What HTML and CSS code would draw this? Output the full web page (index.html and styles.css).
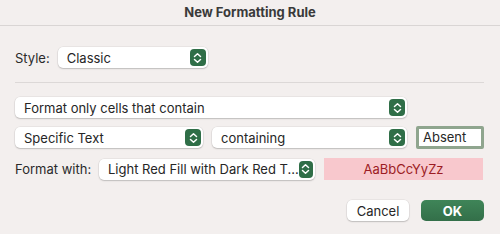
FILE: index.html
```html
<!DOCTYPE html>
<html lang="en">
<head>
    <meta charset="UTF-8">
    <title>New Formatting Rule</title>
    <link rel="stylesheet" href="styles.css">
</head>
<body>
    <div class="dialog">
        <div class="titlebar">New Formatting Rule</div>

        <div class="content">
            <div class="row style-row">
                <span class="label">Style:</span>
                <div class="select w-style">
                    <span class="value">Classic</span>
                    <span class="stepper">
                        <svg width="9" height="12" viewBox="0 0 9 12"><path d="M1.5 4.5 L4.5 1.8 L7.5 4.5 M1.5 7.5 L4.5 10.2 L7.5 7.5" fill="none" stroke="#fff" stroke-width="1.5" stroke-linecap="round" stroke-linejoin="round"/></svg>
                    </span>
                </div>
            </div>

            <div class="divider"></div>

            <div class="row row-type">
                <div class="select w-type">
                    <span class="value">Format only cells that contain</span>
                    <span class="stepper">
                        <svg width="9" height="12" viewBox="0 0 9 12"><path d="M1.5 4.5 L4.5 1.8 L7.5 4.5 M1.5 7.5 L4.5 10.2 L7.5 7.5" fill="none" stroke="#fff" stroke-width="1.5" stroke-linecap="round" stroke-linejoin="round"/></svg>
                    </span>
                </div>
            </div>

            <div class="row row-cond">
                <div class="select w-what">
                    <span class="value">Specific Text</span>
                    <span class="stepper">
                        <svg width="9" height="12" viewBox="0 0 9 12"><path d="M1.5 4.5 L4.5 1.8 L7.5 4.5 M1.5 7.5 L4.5 10.2 L7.5 7.5" fill="none" stroke="#fff" stroke-width="1.5" stroke-linecap="round" stroke-linejoin="round"/></svg>
                    </span>
                </div>
                <div class="select w-op">
                    <span class="value">containing</span>
                    <span class="stepper">
                        <svg width="9" height="12" viewBox="0 0 9 12"><path d="M1.5 4.5 L4.5 1.8 L7.5 4.5 M1.5 7.5 L4.5 10.2 L7.5 7.5" fill="none" stroke="#fff" stroke-width="1.5" stroke-linecap="round" stroke-linejoin="round"/></svg>
                    </span>
                </div>
                <div class="textbox">Absent</div>
            </div>

            <div class="row row-format">
                <span class="label">Format with:</span>
                <div class="select w-format">
                    <span class="value">Light Red Fill with Dark Red T...</span>
                    <span class="stepper">
                        <svg width="9" height="12" viewBox="0 0 9 12"><path d="M1.5 4.5 L4.5 1.8 L7.5 4.5 M1.5 7.5 L4.5 10.2 L7.5 7.5" fill="none" stroke="#fff" stroke-width="1.5" stroke-linecap="round" stroke-linejoin="round"/></svg>
                    </span>
                </div>
                <div class="preview">AaBbCcYyZz</div>
            </div>

            <div class="buttons">
                <button class="btn cancel" type="button">Cancel</button>
                <button class="btn ok" type="button">OK</button>
            </div>
        </div>
    </div>
</body>
</html>
```

FILE: styles.css
```css
body {
    margin: 0;
    background: #f3efee;
    font-family: Inter, "Noto Sans", sans-serif;
    font-size: 13px;
    color: #262626;
}
.dialog {
    width: 500px;
    height: 234px;
}
.titlebar {
    height: 26px;
    line-height: 24px;
    text-align: center;
    font-weight: 700;
    color: #3a3a3a;
    border-bottom: 1px solid #d9d5d4;
    box-sizing: border-box;
}
.content {
    padding: 0 16px 0 15px;
}
.row {
    display: flex;
    align-items: center;
}
.style-row {
    margin-top: 21px;
    gap: 8px;
}
.label {
    color: #2a2a2a;
}
.select {
    height: 21px;
    box-sizing: border-box;
    background: #fff;
    border-radius: 5px;
    box-shadow: 0 0 0 0.5px rgba(0, 0, 0, 0.08), 0 1px 1.5px rgba(0, 0, 0, 0.18);
    display: flex;
    align-items: center;
    justify-content: space-between;
    padding: 0 2px 0 9px;
}
.value {
    white-space: nowrap;
}
.stepper {
    width: 16px;
    height: 17px;
    border-radius: 4px;
    background: #2f6e47;
    display: flex;
    align-items: center;
    justify-content: center;
}
.w-style { width: 150px; }
.w-type { width: 392px; }
.w-what { width: 188px; }
.w-op { width: 195px; }
.w-format { width: 216px; }
.divider {
    height: 1px;
    background: #dcd8d7;
    margin-top: 14px;
}
.row-type {
    margin-top: 14px;
}
.row-cond {
    margin-top: 8px;
}
.w-op {
    margin-left: 9px;
}
.textbox {
    margin-left: 9px;
    width: 68px;
    height: 23px;
    box-sizing: border-box;
    border: 3px solid #8fa58e;
    border-radius: 2px;
    background: #fff;
    line-height: 17px;
    padding-left: 4px;
}
.row-format {
    margin-top: 9px;
}
.row-format .label {
    width: 84px;
}
.preview {
    margin-left: 9px;
    width: 159px;
    height: 22px;
    background: #f8c8cd;
    color: #9c1c24;
    text-align: center;
    line-height: 22px;
}
.buttons {
    display: flex;
    justify-content: flex-end;
    gap: 12px;
    margin-top: 20px;
}
.btn {
    height: 21px;
    border: none;
    border-radius: 5px;
    font-family: inherit;
    font-size: 13px;
    padding: 0;
}
.cancel {
    width: 62px;
    background: #fff;
    color: #262626;
    box-shadow: 0 0 0 0.5px rgba(0, 0, 0, 0.08), 0 1px 1.5px rgba(0, 0, 0, 0.18);
}
.ok {
    width: 63px;
    background: linear-gradient(#3f8558, #336f49);
    color: #fff;
    font-weight: 700;
}
```
